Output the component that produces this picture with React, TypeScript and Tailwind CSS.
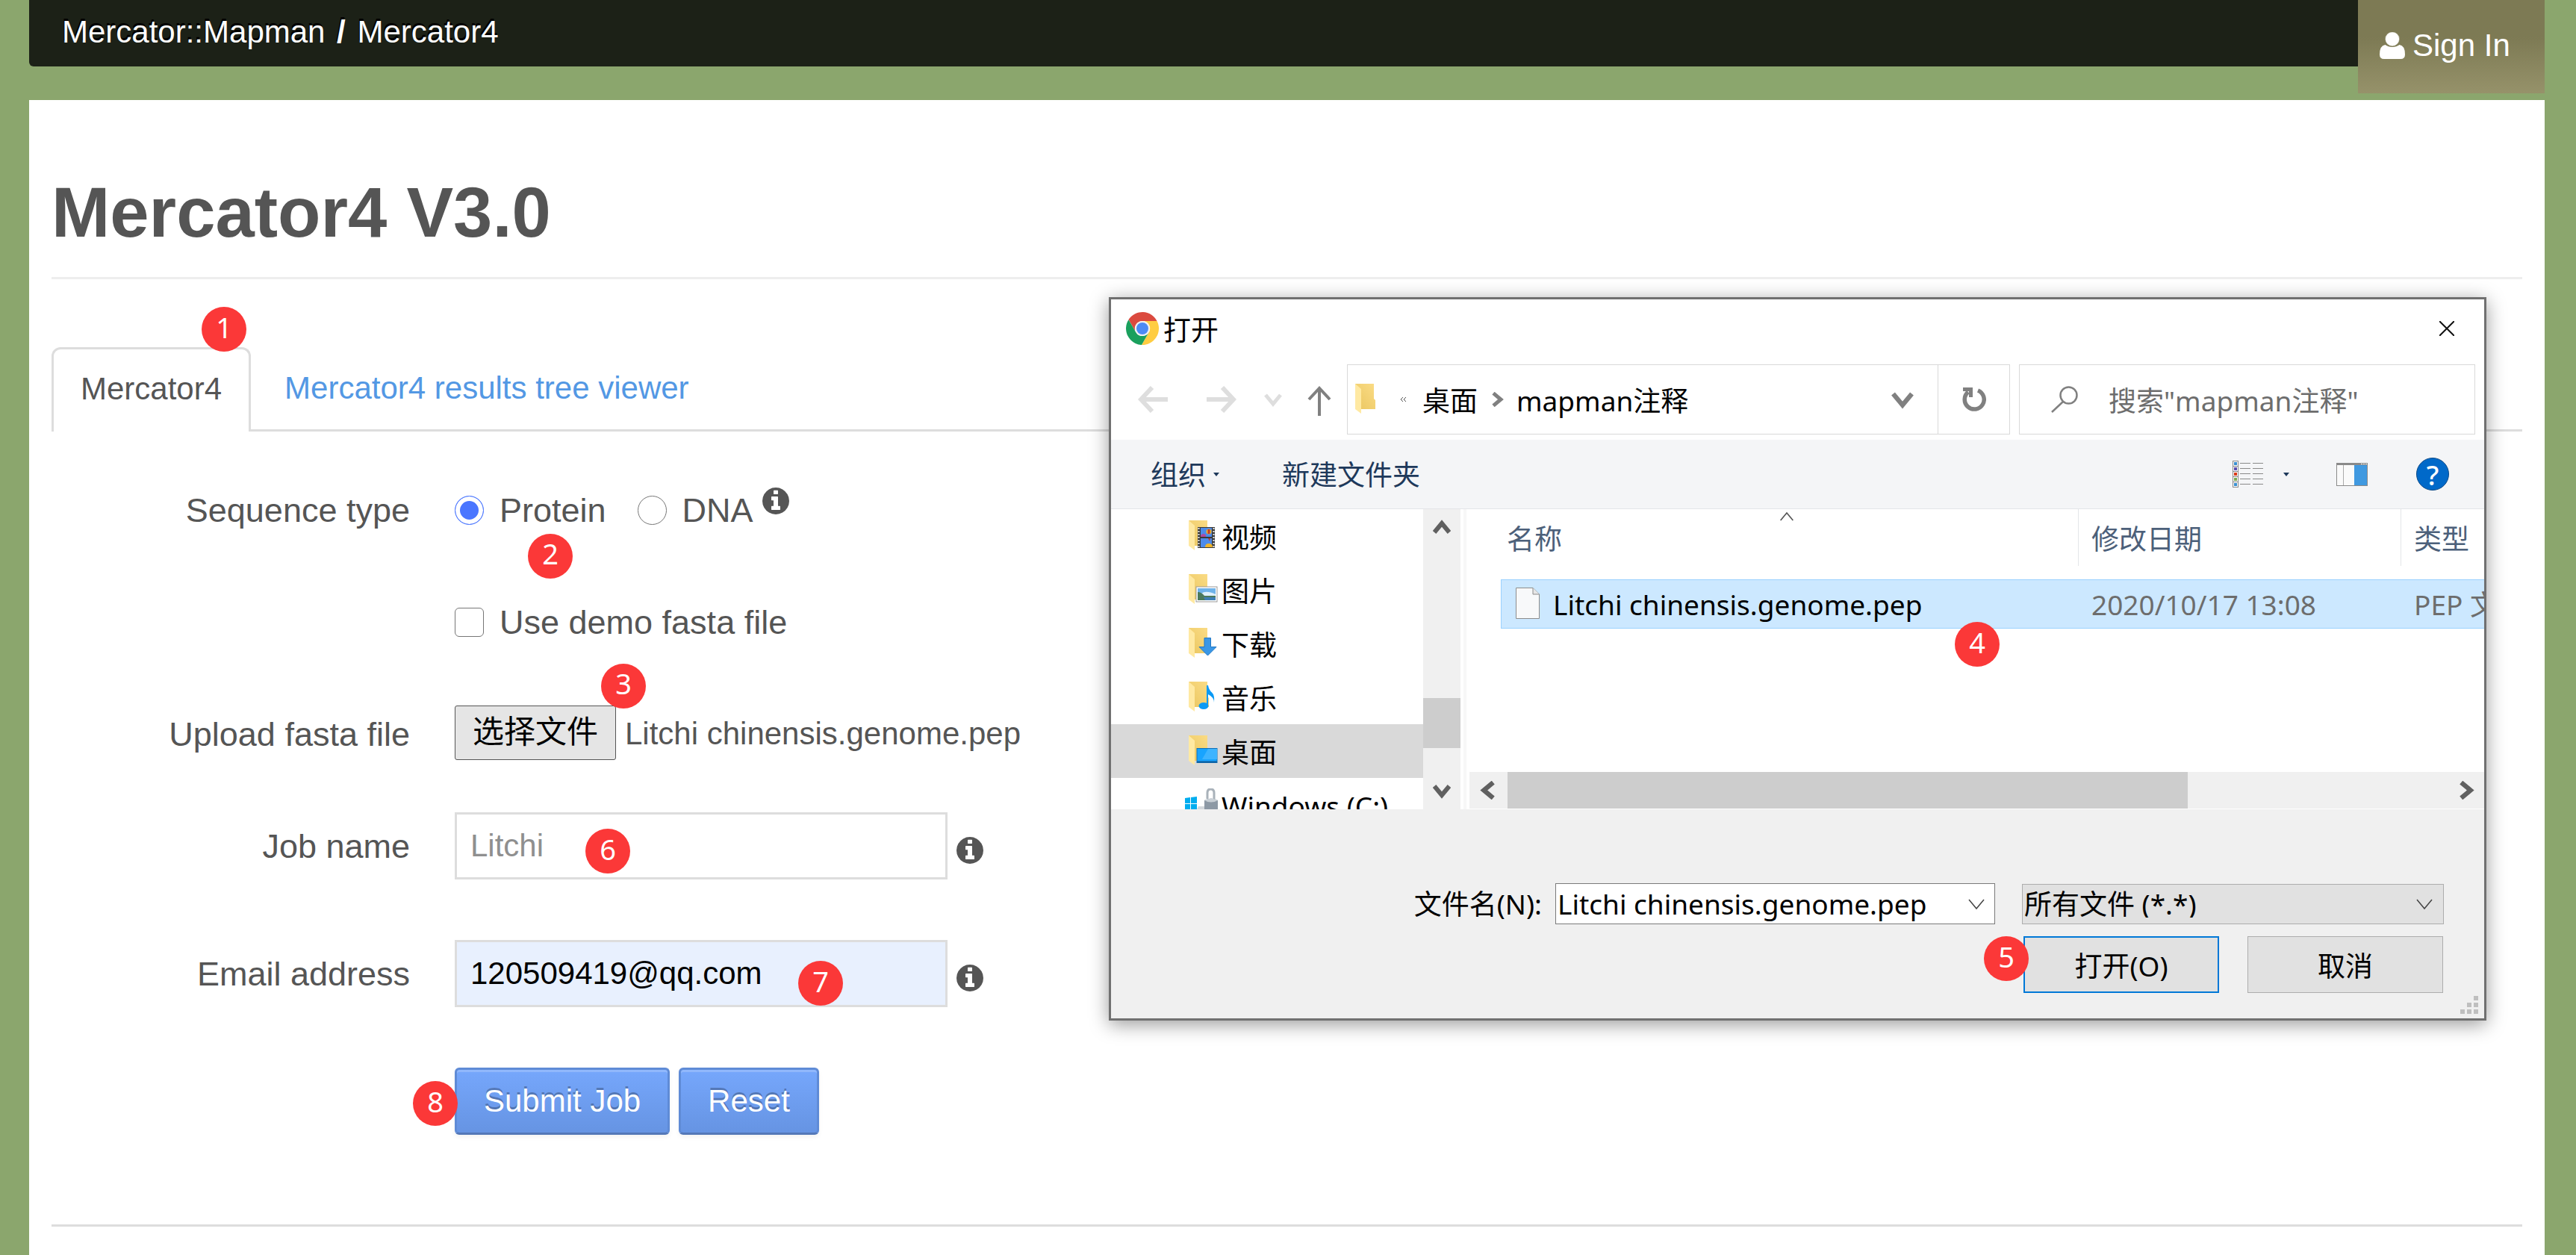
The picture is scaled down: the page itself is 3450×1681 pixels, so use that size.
import React from "react";

const UI = "font-['Noto_Sans','Noto_Sans_CJK_SC',sans-serif]";

function Badge({ n, className }: { n: number; className: string }) {
  return (
    <span
      className={`absolute z-20 flex h-[60px] w-[60px] items-center justify-center rounded-full bg-[#fb3838] pb-[7px] font-['Noto_Sans',sans-serif] text-[38px] leading-none text-white ${className}`}
    >
      {n}
    </span>
  );
}

function InfoIcon() {
  return (
    <svg viewBox="0 128 1536 1536" className="h-9 w-9 shrink-0 fill-[#555]" fillRule="evenodd" aria-hidden="true">
      <path d="M1024 1376v-160q0-14-9-23t-23-9h-96v-512q0-14-9-23t-23-9h-320q-14 0-23 9t-9 23v160q0 14 9 23t23 9h96v320h-96q-14 0-23 9t-9 23v160q0 14 9 23t23 9h448q14 0 23-9t9-23zm-128-896v-160q0-14-9-23t-23-9h-192q-14 0-23 9t-9 23v160q0 14 9 23t23 9h192q14 0 23-9t9-23zm640 416q0 209-103 385.500t-279.500 279.500-385.500 103-385.500-103-279.500-279.500-103-385.500 103-385.500 279.500-279.500 385.500-103 385.500 103 279.500 279.500 103 385.500z" />
    </svg>
  );
}

function ChromeLogo() {
  const arc = "M24 13H45.300A24 24 0 0 0 3.800 11.030L14.470 29.500A11 11 0 0 1 24 13Z";
  return (
    <svg viewBox="0 0 48 48" className="h-11 w-11" aria-hidden="true">
      <path d={arc} fill="#db4a3f" />
      <path d={arc} fill="#ffcd42" transform="rotate(120 24 24)" />
      <path d={arc} fill="#1aa05d" transform="rotate(240 24 24)" />
      <circle cx="24" cy="24" r="11" fill="#f1f1f1" />
      <circle cx="24" cy="24" r="8.700" fill="#4c8bf5" />
    </svg>
  );
}

function Folder({ children }: { children?: React.ReactNode }) {
  return (
    <svg viewBox="0 0 40 42" className="h-[42px] w-10 shrink-0" aria-hidden="true">
      <defs>
        <linearGradient id="folderBack" x1="0" y1="1" x2="1" y2="0">
          <stop offset="0" stopColor="#eac65f" />
          <stop offset="1" stopColor="#fbdc86" />
        </linearGradient>
      </defs>
      <path d="M0 0H25V20L27 22V34H3Z" fill="url(#folderBack)" />
      <path d="M0 0L8 7V40L0 34Z" fill="#ffe9a2" />
      {children}
    </svg>
  );
}

const videoArt = (
  <g>
    <rect x="12" y="9" width="23" height="28" fill="#3a3a3a" />
    <path d="M13.500 10V37M33.500 10V37" stroke="#e8e8e8" strokeWidth="2" strokeDasharray="2 2" />
    <rect x="16" y="10" width="15" height="12" fill="#4d8bea" />
    <rect x="16" y="24" width="15" height="12" fill="#4d8bea" />
    <circle cx="27" cy="15" r="3.500" fill="#f0b429" />
    <path d="M25.500 12h3v6h-3z" fill="#c0392b" />
    <path d="M16 20q4-4 7 0v2h-7z" fill="#b04a9c" />
    <path d="M22 36q0-5 5-5t5 5z" fill="#f0b429" />
    <path d="M26 24h3l-1 4z" fill="#c0392b" />
  </g>
);
const pictureArt = (
  <g>
    <rect x="10" y="17" width="28" height="20" fill="#fff" stroke="#9a9a9a" />
    <rect x="12" y="19" width="24" height="16" fill="#6fb3ea" />
    <path d="M17 26q6-5 19 1v3H14z" fill="#dff0fa" />
    <path d="M12 24q5 0 9 5h15v6H12z" fill="#4c7a5c" />
    <path d="M20 31h16v4H22z" fill="#3f7fb5" />
  </g>
);
const downloadArt = <path d="M21 13.500H29.500V25.500H37L25.500 37L14 25.500H21Z" fill="#3a97e6" stroke="#2177c4" />;
const musicArt = (
  <g fill="#0a9af5">
    <ellipse cx="20" cy="32.500" rx="6.500" ry="4.500" />
    <path d="M24 5h2q1 6 5 9.500t3 13.500q0-7-8-11v16h-2z" />
  </g>
);
const desktopArt = (
  <g>
    <rect x="11" y="17.500" width="27" height="19" fill="#18a4ff" stroke="#0c6fb8" />
    <path d="M26 18h12v14H18z" fill="#3eb4ff" />
    <path d="M11 35.500H38" stroke="#0c5f9e" strokeWidth="2" />
  </g>
);

const folders = [
  { name: "视频", art: videoArt },
  { name: "图片", art: pictureArt },
  { name: "下载", art: downloadArt },
  { name: "音乐", art: musicArt },
  { name: "桌面", art: desktopArt, selected: true },
];

function Chevron({ d, className, stroke }: { d: "up" | "down" | "left" | "right"; className: string; stroke: number }) {
  const paths = { up: "M2 18L12 6L22 18", down: "M2 6L12 18L22 6", left: "M18 2L6 12L18 22", right: "M6 2L18 12L6 22" };
  return (
    <svg viewBox="0 0 24 24" className={className} fill="none" stroke="currentColor" strokeWidth={stroke} aria-hidden="true">
      <path d={paths[d]} />
    </svg>
  );
}

function OpenDialog() {
  return (
    <section
      role="dialog"
      aria-label="打开"
      className={`absolute top-[264px] right-[78px] left-[1446px] z-10 border-[3px] border-[#707070] bg-white text-[37px] leading-none text-black shadow-[0_5px_24px_rgba(0,0,0,0.4)] ${UI}`}
    >
      <div className="flex h-[78px] items-center pr-10 pl-5">
        <ChromeLogo />
        <h2 className="ml-[6px] flex-1 pt-[2px]">打开</h2>
        <button type="button" aria-label="关闭">
          <svg viewBox="0 0 20 20" className="h-5 w-5" stroke="#111" strokeWidth="2">
            <path d="M0 0L20 20M20 0L0 20" />
          </svg>
        </button>
      </div>

      <div className="flex h-[110px] items-start pt-[9px] pr-3">
        <div className="flex h-[94px] w-[316px] shrink-0 items-center pl-9 text-[#dedede]">
          <button type="button" aria-label="后退">
            <svg viewBox="0 0 40 36" className="h-9 w-10" fill="none" stroke="currentColor" strokeWidth="6">
              <path d="M19 2L4 18L19 34M4 18H40" />
            </svg>
          </button>
          <button type="button" aria-label="前进" className="ml-[52px]">
            <svg viewBox="0 0 40 36" className="h-9 w-10" fill="none" stroke="currentColor" strokeWidth="6">
              <path d="M21 2L36 18L21 34M36 18H0" />
            </svg>
          </button>
          <button type="button" aria-label="最近" className="ml-[37px]">
            <Chevron d="down" className="h-6 w-6" stroke={5} />
          </button>
          <button type="button" aria-label="上移" className="ml-[34px] pt-1 text-[#808080]">
            <svg viewBox="0 0 32 40" className="h-10 w-8" fill="none" stroke="currentColor" strokeWidth="4">
              <path d="M2 18L16 3L30 18M16 3V40" />
            </svg>
          </button>
        </div>
        <div className="flex h-[94px] min-w-0 flex-1 items-center border border-[#d9d9d9]">
          <div className="flex min-w-0 flex-1 items-center pl-[10px]">
            <Folder />
            <svg viewBox="0 0 8 6" className="mr-[22px] ml-5 h-[6px] w-2" fill="none" stroke="#555">
              <path d="M4 0L1 3L4 6M8 0L5 3L8 6" />
            </svg>
            <span className="pt-[2px]">桌面</span>
            <Chevron d="right" className="mx-4 h-5 w-5 text-[#808080]" stroke={6} />
            <span className="flex-1 pt-[2px] whitespace-nowrap">mapman注释</span>
            <button type="button" aria-label="地址列表" className="mr-8 text-[#808080]">
              <Chevron d="down" className="h-[30px] w-[30px]" stroke={5} />
            </button>
          </div>
          <button type="button" aria-label="刷新" className="flex h-full w-[96px] items-center justify-center border-l border-[#d9d9d9]">
            <svg viewBox="0 0 32 34" className="h-[34px] w-8" fill="none" stroke="#808080" strokeWidth="5.500">
              <path d="M21 5A13 13 0 1 1 8 7" />
              <path d="M1 3.500H11.500V14" strokeWidth="5" />
            </svg>
          </button>
        </div>
        <label className="ml-3 flex h-[94px] w-[611px] shrink-0 items-center border border-[#d9d9d9] pl-[42px]">
          <svg viewBox="0 0 36 36" className="h-9 w-9 shrink-0" fill="none" stroke="#808080" strokeWidth="2.500">
            <circle cx="23.500" cy="12.500" r="11" />
            <path d="M16 21L1 35" />
          </svg>
          <input
            aria-label="搜索"
            placeholder={'搜索"mapman注释"'}
            className="ml-[41px] h-full min-w-0 flex-1 pt-[2px] outline-none placeholder:text-[#6d6d6d]"
          />
        </label>
      </div>

      <div className="flex h-[93px] items-center border-b border-[#e3e5e8] bg-[#f4f5f7] pr-[47px] pl-[53px] text-[#1e395b]">
        <button type="button" className="flex items-center">
          组织
          <svg viewBox="0 0 8 5" className="ml-[10px] h-[5px] w-2" fill="currentColor">
            <path d="M0 0H8L4 5Z" />
          </svg>
        </button>
        <button type="button" className="ml-[84px]">新建文件夹</button>
        <span className="flex-1" />
        <button type="button" aria-label="更改视图" className="flex items-center">
          <svg viewBox="0 0 42 36" className="h-9 w-[42px]">
            <rect x="0.500" y="0.500" width="7" height="35" fill="#fff" stroke="#8a8a8a" />
            <path d="M0 7.500H8M0 14.500H8M0 21.500H8M0 28.500H8" stroke="#8a8a8a" />
            <path d="M2 2h4v4H2zM2 30h4v4H2z" fill="#3a8fd0" />
            <path d="M2 9h4v4H2z" fill="#5b4fb0" />
            <path d="M2 16h4v4H2z" fill="#d93a1a" />
            <path d="M2 23h4v4H2z" fill="#7cab52" />
            <path d="M10 3.500H24M27 3.500H41M10 10.500H24M27 10.500H41M10 17.500H24M27 17.500H41M10 24.500H24M27 24.500H41M10 31.500H24M27 31.500H41" stroke="#8a8a8a" />
          </svg>
          <svg viewBox="0 0 8 5" className="ml-[26px] h-[5px] w-2" fill="currentColor">
            <path d="M0 0H8L4 5Z" />
          </svg>
        </button>
        <button type="button" aria-label="预览窗格" className="ml-[63px]">
          <svg viewBox="0 0 42 31" className="h-[31px] w-[42px]">
            <rect x="0.500" y="0.500" width="41" height="30" fill="#fafafa" stroke="#8a8a8a" />
            <rect width="42" height="3" fill="#8a8a8a" />
            <path d="M9.500 3V30" stroke="#aaa" />
            <rect x="24" y="3" width="17" height="27" fill="#4099e0" />
            <path d="M33 1.500h2M36 1.500h2M39 1.500h2" stroke="#fff" />
          </svg>
        </button>
        <button
          type="button"
          aria-label="帮助"
          className="ml-[65px] flex h-11 w-11 items-center justify-center rounded-full border border-[#0b4a86] bg-[#0069c9] font-medium text-white"
        >
          ?
        </button>
      </div>

      <div className="flex h-[402px]">
        <ul className="h-full w-[418px] shrink-0 overflow-hidden">
          {folders.map((f) => (
            <li
              key={f.name}
              className={f.selected ? "flex h-[72px] items-center bg-[#d9d9d9] pl-[104px]" : "flex h-[72px] items-center pl-[104px]"}
            >
              <Folder>{f.art}</Folder>
              <span className="ml-1 pt-[3px]">{f.name}</span>
            </li>
          ))}
          <li className="flex h-[72px] items-center pl-[99px]">
            <svg viewBox="0 0 44 44" className="h-11 w-11 shrink-0" aria-hidden="true">
              <path d="M0 13l7-1v8H0zM8 12l8-1v9H8zM0 21h7v8l-7-1zM8 21h8v9l-8-1z" fill="#00adef" />
              <path d="M18 24h10v8H14z" fill="#d4d8dc" />
              <path d="M30 14V6q0-5 4.500-5T39 6v9" fill="none" stroke="#a9b2ba" strokeWidth="3" />
              <path d="M26 16q9-5 18 0v17q-9 4-18 0z" fill="#8d99a5" />
              <path d="M26 16q9-5 18 0q-9 5-18 0z" fill="#c9d0d6" />
            </svg>
            <span className="ml-[5px] pt-[3px] whitespace-nowrap">Windows (C:)</span>
          </li>
        </ul>
        <div className="flex h-full w-[50px] shrink-0 flex-col items-center bg-[#f0f0f0] text-[#606060]">
          <Chevron d="up" className="mt-[13px] h-6 w-6" stroke={6} />
          <span className="mt-[216px] h-[67px] w-full bg-[#cdcdcd]" />
          <Chevron d="down" className="mt-auto mb-[13px] h-6 w-6" stroke={6} />
        </div>
        <div className="ml-1 w-1 shrink-0 bg-[#f7f7f7]" />
        <div className="flex min-w-0 flex-1 flex-col">
          <div className="relative min-h-0 flex-1 overflow-hidden pl-[46px]">
            <Chevron d="up" className="absolute top-0 left-[418px] h-5 w-[22px] text-[#555]" stroke={2} />
            <table className="w-[1605px] table-fixed border-separate border-spacing-0 text-left">
              <colgroup>
                <col className="w-[774px]" />
                <col className="w-[432px]" />
                <col className="w-[399px]" />
              </colgroup>
              <thead>
                <tr className="text-[#4c607a]">
                  <th className="p-0 pb-[18px] font-normal">
                    <div className="flex h-[76px] items-center border-r border-[#e3e5e8] pt-[3px] pl-2">名称</div>
                  </th>
                  <th className="p-0 pb-[18px] font-normal">
                    <div className="flex h-[76px] items-center border-r border-[#e3e5e8] pt-[3px] pl-[17px]">修改日期</div>
                  </th>
                  <th className="p-0 pb-[18px] font-normal">
                    <div className="flex h-[76px] items-center pt-[3px] pl-[17px]">类型</div>
                  </th>
                </tr>
              </thead>
              <tbody>
                <tr className="bg-[#cce8ff] text-[#6d6d6d]">
                  <td className="h-[66px] border-y border-l border-[#99d1ff] p-0 pl-[19px] text-black">
                    <div className="flex items-center">
                      <svg viewBox="0 0 32 42" className="mb-[3px] h-[42px] w-8" aria-hidden="true">
                        <path d="M0.500 0.500H23L31.500 9V41.500H0.500Z" fill="#f8f9fa" stroke="#8c8c8c" />
                        <path d="M23 0.500V9H31.500" fill="#e6e6e6" stroke="#8c8c8c" />
                      </svg>
                      <span className="ml-[18px]">Litchi chinensis.genome.pep</span>
                    </div>
                  </td>
                  <td className="border-y border-[#99d1ff] p-0 pl-[17px]">2020/10/17 13:08</td>
                  <td className="border-y border-[#99d1ff] p-0 pl-[17px]">PEP 文件</td>
                </tr>
              </tbody>
            </table>
          </div>
          <div className="mb-px ml-1 flex h-[49px] items-center bg-[#f0f0f0] text-[#606060]">
            <Chevron d="left" className="mx-[13px] h-[25px] w-[25px]" stroke={6} />
            <span className="h-full w-[67%] bg-[#cdcdcd]" />
            <Chevron d="right" className="mr-3 ml-auto h-[25px] w-[25px]" stroke={6} />
          </div>
        </div>
        <Badge n={4} className="top-[432px] left-[1130px]" />
      </div>

      <div className="bg-[#f0f0f0] pt-[99px]">
        <div className="flex items-center justify-end pr-[54px]">
          <label htmlFor="filename" className="whitespace-nowrap">文件名(N):</label>
          <div className="ml-[18px] flex h-[55px] w-[589px] items-center border border-[#7a7a7a] bg-white pr-3">
            <input id="filename" defaultValue="Litchi chinensis.genome.pep" className="h-full min-w-0 flex-1 pl-[2px] outline-none" />
            <Chevron d="down" className="h-6 w-6 text-[#444]" stroke={1.5} />
          </div>
          <div className="relative ml-9 flex w-[565px] items-center">
            <select aria-label="文件类型" className="h-[54px] w-full appearance-none border border-[#adadad] bg-[#e1e1e1] pl-[2px]">
              <option>所有文件 (*.*)</option>
            </select>
            <Chevron d="down" className="pointer-events-none absolute right-[14px] h-6 w-6 text-[#444]" stroke={1.5} />
          </div>
        </div>
        <div className="mt-4 flex justify-end gap-[38px] pr-[55px]">
          <div className="relative">
            <button type="button" className="h-[76px] w-[262px] border-2 border-[#0078d7] bg-[#e1e1e1] pt-[2px]">打开(O)</button>
            <Badge n={5} className="top-0 -left-[53px]" />
          </div>
          <button type="button" className="h-[76px] w-[262px] border border-[#adadad] bg-[#e1e1e1] pt-[2px]">取消</button>
        </div>
        <div className="flex h-[34px] items-end justify-end pr-2 pb-[6px]">
          <svg viewBox="0 0 24 24" className="h-6 w-6" fill="#bfbfbf" aria-hidden="true">
            <path d="M18 0h6v6h-6zM9 9h6v6H9zM18 9h6v6h-6zM0 18h6v6H0zM9 18h6v6H9zM18 18h6v6h-6z" />
          </svg>
        </div>
      </div>
    </section>
  );
}

function Row({ label, htmlFor, children }: { label?: string; htmlFor?: string; children: React.ReactNode }) {
  return (
    <div className="flex h-[90px] items-center">
      <div className="mr-[60px] w-[480px] shrink-0 text-right text-[45px]">
        {label && <label htmlFor={htmlFor}>{label}</label>}
      </div>
      <div className="relative flex items-center">{children}</div>
    </div>
  );
}

const radio =
  "h-[39px] w-[39px] shrink-0 appearance-none rounded-full border border-[#767676] bg-white checked:border-[#4a76ff] checked:bg-[#4a76ff] checked:shadow-[inset_0_0_0_6px_white]";
const blueButton =
  "h-[90px] rounded-[6px] border-[3px] border-[#5f8bd6] border-b-[#5478b8] bg-linear-to-b from-[#76a7fc] to-[#6694e3] px-9 text-[42px] leading-none text-white [text-shadow:0_-3px_0_rgba(0,0,0,0.25)] shadow-[inset_0_3px_0_rgba(255,255,255,0.2),0_3px_6px_rgba(0,0,0,0.05)]";

export default function App() {
  return (
    <div className="min-h-screen overflow-hidden bg-[#8ba66d] pr-[42px] pl-[39px] font-['Liberation_Sans','Noto_Sans_CJK_SC',sans-serif] text-[42px] leading-none text-[#555]">
      <header className="flex h-[89px] items-start justify-between rounded-b-[6px] bg-[#1c2117]">
        <nav className="flex h-[86px] items-center whitespace-pre pl-11 text-white [text-shadow:-1px_-3px_0_#000]">
          <a href="#mapman">Mercator::Mapman</a>
          <b className="px-1"> / </b>
          <a href="#mercator4">Mercator4</a>
        </nav>
        <a
          href="#signin"
          className="flex h-[125px] w-[250px] items-center gap-[10px] bg-linear-to-b from-[#7d7a54] from-40% to-[#96926a] pb-1 pl-[29px] whitespace-nowrap text-white"
        >
          <svg viewBox="0 0 34 36" className="h-9 w-[34px]" fill="currentColor" aria-hidden="true">
            <path d="M7.500 17Q11.500 20 17 20T26.500 17Q34 18 34 30Q34 36 28 36H6Q0 36 0 30Q0 18 7.500 17Z" />
            <circle cx="17" cy="9.300" r="9.600" stroke="#807d57" strokeWidth="0.600" />
          </svg>
          <span>Sign In</span>
        </a>
      </header>

      <main className="relative mt-[45px] min-h-[1547px] bg-white px-[30px] pt-[88px]">
        <h1 className="border-b-[3px] border-[#eee] pb-[23px] text-[94px] leading-[126px] font-bold">Mercator4 V3.0</h1>

        <div role="tablist" className="mt-[91px] flex h-[113px] items-stretch border-b-[3px] border-[#ddd]">
          <a
            href="#mercator4"
            role="tab"
            aria-selected="true"
            className="relative -mb-[3px] flex items-center rounded-t-[12px] border-[3px] border-b-0 border-[#ddd] bg-white px-9 pb-[5px]"
          >
            Mercator4
            <Badge n={1} className="-top-[57px] right-[3px]" />
          </a>
          <a href="#viewer" role="tab" aria-selected="false" className="ml-[6px] flex items-center px-[39px] text-[#5398e4]">
            Mercator4 results tree viewer
          </a>
        </div>

        <form className="pt-[60px]" onSubmit={(e) => e.preventDefault()}>
          <div className="flex flex-col gap-[60px]">
            <Row label="Sequence type" htmlFor="protein">
              <input id="protein" type="radio" name="seq" defaultChecked className={radio} />
              <label htmlFor="protein" className="ml-[21px] text-[45px]">Protein</label>
              <input id="dna" type="radio" name="seq" className={`ml-[42px] ${radio}`} />
              <label htmlFor="dna" className="mr-3 ml-[21px] text-[45px]">DNA</label>
              <span className="-mt-6">
                <InfoIcon />
              </span>
              <Badge n={2} className="top-[54px] left-[98px]" />
            </Row>
            <Row>
              <input id="demo" type="checkbox" className="h-[39px] w-[39px] appearance-none rounded-[6px] border border-[#767676] bg-white" />
              <label htmlFor="demo" className="ml-[21px] text-[45px]">Use demo fasta file</label>
            </Row>
            <Row label="Upload fasta file" htmlFor="upload">
              <button id="upload" type="button" className="mb-1 h-[73px] w-[216px] rounded-[3px] border border-[#555] bg-[#e5e5e5] text-black">
                选择文件
              </button>
              <span className="ml-3 whitespace-nowrap">Litchi chinensis.genome.pep</span>
              <Badge n={3} className="-top-[56px] left-[196px]" />
            </Row>
            <Row label="Job name" htmlFor="job">
              <input id="job" defaultValue="Litchi" className="mr-3 h-[90px] w-[660px] border-[3px] border-[#ddd] bg-white px-[18px] text-[#8f8f8f] outline-none" />
              <span className="pt-3">
                <InfoIcon />
              </span>
              <Badge n={6} className="top-[22px] left-[175px]" />
            </Row>
          </div>
          <div className="mt-[81px] flex flex-col gap-[81px]">
            <Row label="Email address" htmlFor="email">
              <input
                id="email"
                type="email"
                defaultValue="120509419@qq.com"
                className="mr-3 h-[90px] w-[660px] border-[3px] border-[#ddd] bg-[#e8f0fe] px-[18px] text-black outline-none"
              />
              <span className="pt-3">
                <InfoIcon />
              </span>
              <Badge n={7} className="top-[28px] left-[460px]" />
            </Row>
            <Row>
              <button type="submit" className={blueButton}>Submit Job</button>
              <button type="reset" className={`ml-3 ${blueButton}`}>Reset</button>
              <Badge n={8} className="top-[18px] -left-[56px]" />
            </Row>
          </div>
        </form>

        <hr className="mt-[120px] border-t-[3px] border-[#ddd]" />
        <OpenDialog />
      </main>
    </div>
  );
}
